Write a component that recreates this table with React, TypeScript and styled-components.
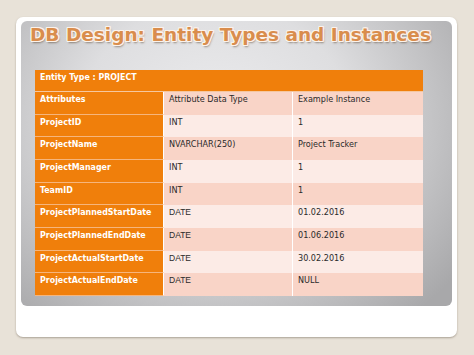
import { Fragment } from "react";
import styled, { createGlobalStyle } from "styled-components";

const GlobalStyle = createGlobalStyle`
  html, body {
    margin: 0;
    padding: 0;
    background: #e8e2d8;
  }
`;

const Page = styled.div`
  width: 474px;
  height: 355px;
  box-sizing: border-box;
  padding: 17px 17px 0 16px;
  background: #e8e2d8;
`;

const Card = styled.div`
  height: 320px;
  box-sizing: border-box;
  padding: 4px 5px 31px 5px;
  background: #ffffff;
  border-radius: 7px;
  box-shadow: 0 1px 2px rgba(120, 110, 95, 0.55);
`;

const Panel = styled.section`
  height: 100%;
  box-sizing: border-box;
  display: flex;
  flex-direction: column;
  padding: 0 29px 10px 14px;
  border-radius: 6px;
  background: radial-gradient(
    ellipse 70% 90% at 45% 35%,
    #ececee 0%,
    #dedee0 45%,
    #a8a8aa 100%
  );
`;

const Title = styled.h1`
  margin: 0 0 0 -5px;
  height: 49px;
  font-family: "DejaVu Sans", Verdana, sans-serif;
  font-weight: 700;
  font-size: 18.5px;
  line-height: 27px;
  white-space: nowrap;
  color: #d98d4d;
  text-shadow: -1px -1px 0 #fbf3ec, 1px -1px 0 #fbf3ec, -1px 1px 0 #fbf3ec,
    1px 1px 0 #fbf3ec, 0 -1px 0 #fbf3ec, 0 1px 0 #fbf3ec, -1px 0 0 #fbf3ec,
    1px 0 0 #fbf3ec, 1px 2px 2px rgba(70, 50, 30, 0.5);
`;

const Table = styled.div`
  display: grid;
  grid-template-columns: 129px 129px 130px;
  grid-template-rows: 22px repeat(9, 22.7px);
  width: 388px;
  font-family: "DejaVu Sans Condensed", "DejaVu Sans", Tahoma, sans-serif;
  font-size: 9px;
  line-height: 10px;
`;

const HeadCell = styled.div`
  grid-column: 1 / 4;
  padding: 2px 5px;
  background: #f07f0b;
  color: #ffffff;
  font-weight: 700;
  font-size: 8.8px;
  border-bottom: 1px solid #f6c79e;
`;

const NameCell = styled.div`
  padding: 2px 5px;
  background: #f07f0b;
  color: #ffffff;
  font-weight: 700;
  font-size: 8.8px;
  border-bottom: 1px solid #f6b57c;
  border-right: 1px solid #ffffff;
`;

const ValueCell = styled.div<{ $dark: boolean; $last?: boolean; $arial?: boolean }>`
  padding: 2px 5px;
  background: ${(p) => (p.$dark ? "#f9d4c7" : "#fcebe6")};
  color: #2a2a2a;
  border-right: ${(p) => (p.$last ? "none" : "1px solid #ffffff")};
  font-family: ${(p) =>
    p.$arial
      ? '"Liberation Sans", Arial, sans-serif'
      : '"DejaVu Sans Condensed", "DejaVu Sans", Tahoma, sans-serif'};
  font-size: ${(p) => (p.$arial ? "8.5px" : "9px")};
`;

const rows = [
  ["Attributes", "Attribute Data Type", "Example Instance"],
  ["ProjectID", "INT", "1"],
  ["ProjectName", "NVARCHAR(250)", "Project Tracker"],
  ["ProjectManager", "INT", "1"],
  ["TeamID", "INT", "1"],
  ["ProjectPlannedStartDate", "DATE", "01.02.2016"],
  ["ProjectPlannedEndDate", "DATE", "01.06.2016"],
  ["ProjectActualStartDate", "DATE", "30.02.2016"],
  ["ProjectActualEndDate", "DATE", "NULL"],
];

export default function App() {
  return (
    <>
      <GlobalStyle />
      <Page>
        <Card>
          <Panel>
            <Title>DB Design: Entity Types and Instances</Title>
            <Table>
              <HeadCell>Entity Type : PROJECT</HeadCell>
              {rows.map(([name, type, example], i) => (
                <Fragment key={name}>
                  <NameCell>{name}</NameCell>
                  <ValueCell $dark={i % 2 === 0} $arial={type === "DATE"}>
                    {type}
                  </ValueCell>
                  <ValueCell $dark={i % 2 === 0} $last>
                    {example}
                  </ValueCell>
                </Fragment>
              ))}
            </Table>
          </Panel>
        </Card>
      </Page>
    </>
  );
}
